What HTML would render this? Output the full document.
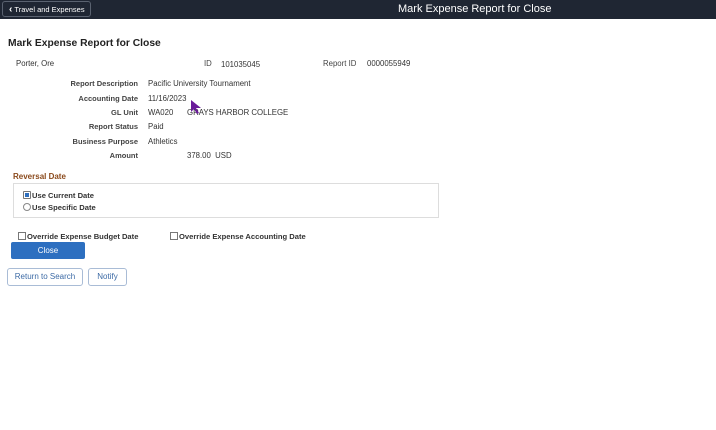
<!DOCTYPE html><html><head><style>
body{margin:0;width:716px;height:430px;background:#fff;font-family:"Liberation Sans",Arial,sans-serif;position:relative;overflow:hidden;color:#333}
.a{position:absolute;white-space:nowrap}
.hd{position:absolute;left:0;top:0;width:716px;height:19px;background:#1f2633}
.lb{font-size:7.5px;font-weight:bold;color:#444;text-align:right;width:100px;left:38px}
.v{font-size:7.8px;color:#333}
.b{font-size:7.6px;font-weight:bold;color:#333}
.cb{display:inline-block;width:6px;height:6px;border:1px solid #777;vertical-align:-1px;margin-right:1px;background:#fff}
.rd{display:inline-block;width:6px;height:6px;border:1px solid #888;border-radius:50%;vertical-align:-1px;margin-right:1px}
</style></head><body>
<div class="hd"></div>
<div class="a" style="left:2px;top:1px;width:89px;height:16px;border:1px solid #5a6270;border-radius:3px;color:#fff;font-size:7.5px;line-height:16px;box-sizing:border-box;padding-left:6px"><span style="font-size:10px;font-weight:bold">&lsaquo;</span>&nbsp;Travel and Expenses</div>
<div class="a" style="left:398px;top:3px;color:#fff;font-size:11px">Mark Expense Report for Close</div>
<div class="a" style="left:8px;top:38px;font-size:10.3px;font-weight:bold;color:#222">Mark Expense Report for Close</div>
<div class="a v" style="left:16px;top:59px">Porter, Ore</div>
<div class="a v" style="left:204px;top:59px;color:#444">ID</div>
<div class="a v" style="left:221px;top:60px">101035045</div>
<div class="a v" style="left:323px;top:59px;color:#444">Report ID</div>
<div class="a v" style="left:367px;top:59px">0000055949</div>
<div class="a lb" style="top:79px">Report Description</div><div class="a v" style="left:148px;top:79px">Pacific University Tournament</div>
<div class="a lb" style="top:94px">Accounting Date</div><div class="a v" style="left:148px;top:94px">11/16/2023</div>
<div class="a lb" style="top:108px">GL Unit</div><div class="a v" style="left:148px;top:108px">WA020</div><div class="a v" style="left:187px;top:108px">GRAYS HARBOR COLLEGE</div>
<div class="a lb" style="top:122px">Report Status</div><div class="a v" style="left:148px;top:122px">Paid</div>
<div class="a lb" style="top:137px">Business Purpose</div><div class="a v" style="left:148px;top:137px">Athletics</div>
<div class="a lb" style="top:151px">Amount</div><div class="a v" style="left:187px;top:151px">378.00&nbsp; USD</div>
<svg class="a" style="left:190px;top:99px" width="12" height="16"><path d="M1 1 L1 13 L4 10 L7 15 L9 14 L6 9 L11 9 Z" fill="#6a1b9a"/></svg>
<div class="a" style="left:13px;top:172px;font-size:8px;font-weight:bold;color:#8b4a1c">Reversal Date</div>
<div class="a" style="left:13px;top:183px;width:426px;height:35px;border:1px solid #ddd;box-sizing:border-box"></div>
<div class="a b" style="left:23px;top:191px"><span class="cb" style="border-radius:1px;background:#2f6fbe;box-shadow:inset 0 0 0 1px #fff"></span>Use Current Date</div>
<div class="a b" style="left:23px;top:203px"><span class="rd"></span>Use Specific Date</div>
<div class="a b" style="left:18px;top:232px"><span class="cb"></span>Override Expense Budget Date</div>
<div class="a b" style="left:170px;top:232px"><span class="cb"></span>Override Expense Accounting Date</div>
<div class="a" style="left:11px;top:242px;width:74px;height:17px;background:#2d6fc0;border-radius:2px;color:#fff;font-size:8px;line-height:17px;text-align:center">Close</div>
<div class="a" style="left:7px;top:268px;width:76px;height:18px;border:1px solid #a9bcd6;border-radius:3px;box-sizing:border-box;color:#3c6aa5;font-size:8px;line-height:16px;text-align:center">Return to Search</div>
<div class="a" style="left:88px;top:268px;width:39px;height:18px;border:1px solid #a9bcd6;border-radius:3px;box-sizing:border-box;color:#3c6aa5;font-size:8px;line-height:16px;text-align:center">Notify</div>
</body></html>
